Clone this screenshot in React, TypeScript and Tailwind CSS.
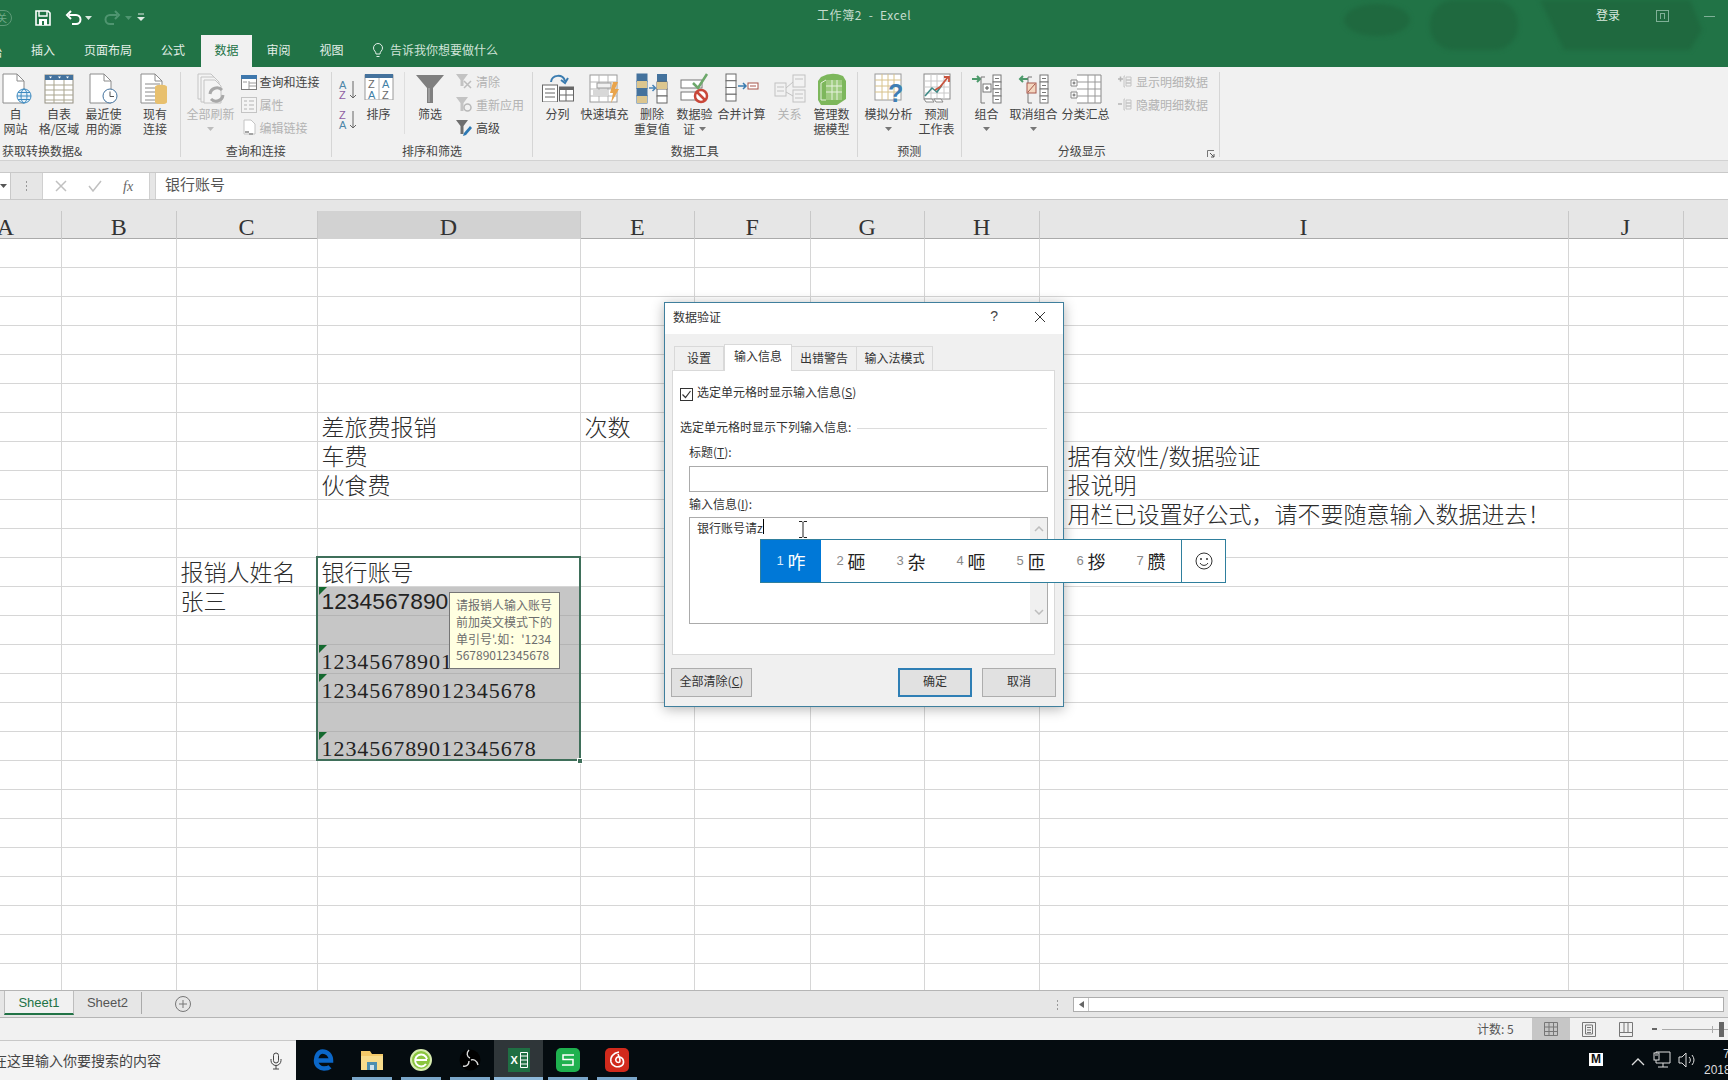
import React from "react";

type P = { children?: React.ReactNode; w?: number; h?: number };
const S = ({ children, w = 32, h = 32 }: P) => (
  <svg width={w} height={h} viewBox={`0 0 ${w} ${h}`} className="shrink-0" fill="none">{children}</svg>
);
const GR = "#8c8c8c";
const Doc = ({ x = 3, c = GR }: { x?: number; c?: string }) => (
  <>
    <path d={`M${x} 2h14l7 7v22h-21z`} fill="#fff" stroke={c} />
    <path d={`M${x + 14} 2v7h7`} stroke={c} />
  </>
);
const Cols = ({ x, y, w, h, n, c = "#8a8a8a", f = "#fff" }: { x: number; y: number; w: number; h: number; n: number; c?: string; f?: string }) => (
  <>
    {Array.from({ length: n }).map((_, i) => (
      <rect key={i} x={x} y={y + (i * h) / n} width={w} height={h / n} fill={f} stroke={c} />
    ))}
  </>
);

const IWeb = () => (
  <S w={36}><Doc x={5} /><circle cx="26" cy="24" r="7" fill="#e6f1f8" stroke="#3d8ac0" /><ellipse cx="26" cy="24" rx="3" ry="7" stroke="#3d8ac0" /><path d="M19 24h14M20 20.5h12M20 27.5h12" stroke="#3d8ac0" /></S>
);
const ITable = () => (
  <S w={30}>
    <rect x="1" y="3" width="28" height="28" fill="#fff" stroke="#938f82" />
    <rect x="1" y="3" width="28" height="5" fill="#44729d" />
    <path d="M5 4.5h3l-1.5 2zM14 4.5h3l-1.5 2zM22 4.5h3l-1.5 2z" fill="#fff" />
    <path d="M1 13h28M1 18h28M1 23h28M1 28h28M10 8v23M20 8v23" stroke="#a9a58f" />
  </S>
);
const IRecent = () => (
  <S w={30}><Doc x={1} /><circle cx="21" cy="24" r="7" fill="#fff" stroke="#44729d" /><path d="M21 19.5V24.5H25" stroke="#555" /></S>
);
const IExisting = () => (
  <S w={30}><Doc x={1} /><path d="M5 12h15M5 16h13M5 20h13M5 24h13M5 28h13" stroke="#8a8a8a" /><path d="M15 15c0-3 12-3 12 0v15c0 3-12 3-12 0z" fill="#e8c06e" /></S>
);
const IRefresh = () => (
  <S w={32}>
    <g stroke="#c4c4c4"><path d="M3 2h13l5 5v20H3z" fill="#f4f4f4" /><path d="M6 5h13l5 5v20H6z" fill="#f4f4f4" /><path d="M9 8h11l6 6v17H9z" fill="#f4f4f4" /></g>
    <path d="M15 22a7 7 0 0 1 12-4M28 23a7 7 0 0 1-12 4" stroke="#a8a8a8" strokeWidth="3" />
  </S>
);
const IConn = () => (
  <S w={16} h={16}><rect x=".5" y="1.5" width="15" height="14" fill="#fff" stroke="#7c7c7c" /><rect x="0" y="1" width="16" height="4" fill="#3f78ad" /><path d="M8 7v8M8 9h7M8 12h7M2 8h4" stroke="#9a9a9a" /></S>
);
const IProp = () => (
  <S w={16} h={17}><rect x=".5" y="1.5" width="15" height="15" fill="#f4f4f4" stroke="#c4c4c4" /><path d="M3 5h3M3 9h3M3 13h3M8 5h5M8 9h5M8 13h5" stroke="#b4b4b4" /></S>
);
const ILink = () => (
  <S w={16} h={17}><path d="M3 1h7l4 4v10H3z" fill="#fff" stroke="#c4c4c4" /><path d="M4 13h4M8 15h4" stroke="#a4a4a4" strokeWidth="2" /></S>
);
const ISortA = ({ flip = false }: { flip?: boolean }) => (
  <S w={20} h={26}>
    <text x="1" y="11" fontSize="11" fontFamily="Liberation Sans" fill={flip ? "#8e5ea2" : "#4d86a8"}>{flip ? "Z" : "A"}</text>
    <text x="1" y="21" fontSize="11" fontFamily="Liberation Sans" fill={flip ? "#4d86a8" : "#8e5ea2"}>{flip ? "A" : "Z"}</text>
    <path d="M15 3v17M12 17l3 3 3-3" stroke="#666" />
  </S>
);
const ISort = () => (
  <S w={30} h={28}>
    <rect x="1" y="3" width="28" height="25" fill="#fff" stroke="#9a9a9a" />
    <rect x="1" y="2" width="28" height="4" fill="#44729d" />
    <path d="M15 6v22" stroke="#b0b0b0" />
    <g fontFamily="Liberation Sans" fontSize="11">
      <text x="4" y="16" fill="#6a6a6a">Z</text><text x="18" y="16" fill="#3f7fa6">A</text>
      <text x="4" y="27" fill="#3f7fa6">A</text><text x="18" y="27" fill="#6a6a6a">Z</text>
    </g>
  </S>
);
const IFunnel = () => (
  <S w={30}><path d="M1 3h28L18 16v15h-6V16z" fill="#7f7f7f" /><path d="M14 16v14" stroke="#bdbdbd" /></S>
);
const IFClear = () => (
  <S w={18} h={17}><path d="M1 1h12L8.5 7v6h-3V7z" fill="#c3c3c3" /><path d="M9 8l7 7M16 8l-7 7" stroke="#bdbdbd" strokeWidth="1.5" /></S>
);
const IFRe = () => (
  <S w={18} h={17}><path d="M1 1h12L8.5 7v8h-3V7z" fill="#c3c3c3" /><circle cx="12.5" cy="11.5" r="3.5" stroke="#b8b8b8" strokeWidth="1.5" /></S>
);
const IFAdv = () => (
  <S w={18} h={17}><path d="M1 1h12L8.5 7v8h-3V7z" fill="#6e6e6e" /><path d="M15 7l2 2-6 7-3 1 1-3z" fill="#2c78b3" /></S>
);
const ISplit = () => (
  <S w={34} h={30}>
    <path d="M10 10c1-8 12-8 14-1M20 8l4 3 3-5" stroke="#3b7cb0" strokeWidth="2" />
    <rect x="1.5" y="13" width="15" height="17" fill="#fff" stroke="#666" /><path d="M4 17h10M4 21h10M4 25h10" stroke="#666" />
    <rect x="18.5" y="15" width="14" height="14" fill="#fff" stroke="#666" /><rect x="18.5" y="15" width="14" height="3" fill="#666" /><path d="M25 18v11M19 23h13" stroke="#666" />
  </S>
);
const IFlash = () => (
  <S w={32}>
    <rect x="1" y="3" width="27" height="27" fill="#fff" stroke="#9a9a9a" />
    <path d="M1 10h27M1 17h27M1 24h27M10 3v27M19 3v27" stroke="#b5b5b5" />
    <rect x="8" y="11" width="14" height="5" fill="#f1f1f1" stroke="#9a9a9a" />
    <rect x="4" y="18" width="15" height="6" fill="#d8d8d8" />
    <path d="M24 10l5 0-3 7h4l-8 14 2-10h-3z" fill="#e9a44c" />
  </S>
);
const IDup = () => (
  <S w={32}>
    <Cols x={1} y={2} w={10} h={29} n={4} c="#44729d" f="#44729d" />
    <rect x="1" y="9" width="10" height="7" fill="#dcc68f" /><rect x="1" y="24" width="10" height="7" fill="#dcc68f" />
    <path d="M13 16h6M16.5 13l3 3-3 3" stroke="#4a85b8" strokeWidth="1.5" />
    <rect x="21" y="2" width="10" height="8" fill="#44729d" /><Cols x={21} y={10} w={10} h={21} n={3} c="#666" />
    <rect x="21" y="10" width="10" height="7" fill="#dcc68f" />
  </S>
);
const IValid = () => (
  <S w={30}>
    <rect x="1" y="8" width="21" height="8" fill="#fff" stroke="#777" /><rect x="1" y="20" width="15" height="8" fill="#fff" stroke="#777" />
    <path d="M13 11l5 5 9-14" stroke="#6da86b" strokeWidth="2.5" />
    <circle cx="21" cy="24" r="6" fill="#fff" stroke="#c9483a" strokeWidth="2.5" /><path d="M17 20l8 8" stroke="#c9483a" strokeWidth="2.5" />
  </S>
);
const IMerge = () => (
  <S w={34}>
    <Cols x={1} y={2} w={10} h={27} n={4} c="#6a6a6a" />
    <path d="M13 14h8M18 11l3 3-3 3" stroke="#3b7cb0" strokeWidth="1.5" />
    <rect x="23" y="11" width="10" height="6" fill="#fff" stroke="#a8574c" /><path d="M25 14h6" stroke="#a8574c" />
  </S>
);
const IRel = () => (
  <S w={32}>
    <g stroke="#c2c2c2" fill="#f2f2f2">
      <rect x="1" y="11" width="11" height="13" /><rect x="19" y="3" width="12" height="12" /><rect x="19" y="18" width="12" height="12" />
    </g>
    <path d="M3 15h7M3 19h7M21 7h8M21 22h8M21 26h8" stroke="#c2c2c2" /><path d="M12 16l7-6M12 20l7 4" stroke="#c2c2c2" />
  </S>
);
const IModel = () => (
  <S w={30} h={34}>
    <path d="M4 5Q15-1 26 4l3 5v18l-9 6H4l-3-5V9z" fill="#7db75c" />
    <path d="M9 8h16v20H9z" fill="#9ecb80" /><path d="M9 8l-5 3v17l5 0M9 14h16M9 20h16M15 8v20M20 8v20" stroke="#e7f2de" />
  </S>
);
const IWhatIf = () => (
  <S w={30}>
    <rect x="1" y="2" width="26" height="26" fill="#fff" stroke="#9a9a9a" />
    <path d="M1 8h26M1 14h26M1 20h26M8 2v26M14 2v26M20 2v26" stroke="#d8c28a" />
    <text x="14" y="30" fontSize="25" fontWeight="700" fontFamily="Liberation Sans" fill="#3f7fb5">?</text>
  </S>
);
const IForecast = () => (
  <S w={30}>
    <rect x="2" y="2" width="26" height="25" fill="#fff" stroke="#8a8a8a" />
    <path d="M2 9h26M2 15h26M2 21h26M9 2v25M15 2v25M22 2v25" stroke="#c8c8c8" />
    <path d="M3 24l7-8 5 4 5-7" stroke="#3f8b88" strokeWidth="1.6" /><path d="M13 18l5-3 8-10M22 5h5v5" stroke="#c9553f" strokeWidth="1.8" />
    <path d="M2 27h8l2 3h-8zM12 27h7l2 3h-7z" fill="#fff" stroke="#8a8a8a" />
  </S>
);
const OutlineTable = ({ x, m }: { x: number; m: React.ReactNode }) => (
  <>
    <path d={`M${x + 5} 5h-4v26h4`} stroke="#777" />
    <rect x={x + 3} y="12" width="8" height="8" fill="#fff" stroke="#777" />{m}
    <Cols x={x + 13} y={3} w={8} h={28} n={4} c="#777" />
    <path d={`M${x + 15} 6.5h4M${x + 15} 13.5h4M${x + 15} 20.5h4M${x + 15} 27.5h4`} stroke="#777" />
  </>
);
const IGroup = () => (
  <S w={32}>
    <path d="M1 7h8M6 4l3 3-3 3" stroke="#4d9a6b" strokeWidth="2" />
    <OutlineTable x={9} m={<path d="M14 16h4M16 14v4" stroke="#555" />} />
  </S>
);
const IUngroup = () => (
  <S w={32}>
    <path d="M10 7H2M5 4L2 7l3 3" stroke="#4d9a6b" strokeWidth="2" />
    <path d="M14 5h-4v26h4" stroke="#777" /><rect x="9" y="11" width="9" height="10" fill="#f3d7c0" stroke="#a8574c" /><path d="M10 20l7-8" stroke="#a8574c" />
    <Cols x={22} y={3} w={8} h={28} n={4} c="#777" />
    <path d="M24 6.5h4M24 13.5h4M24 20.5h4M24 27.5h4" stroke="#777" />
  </S>
);
const ISubtotal = () => (
  <S w={32}>
    <path d="M7 3h24v28H7M1 8h6v6H1zM1 20h6v6H1z" stroke="#888" fill="#fff" />
    <path d="M7 10h24M7 17h24M7 24h24M18 3v28M25 3v28" stroke="#999" /><path d="M2.5 11h3M4 9.5v3M2.5 23h3M4 21.5v3" stroke="#666" />
  </S>
);
const IShow = ({ minus = false }: { minus?: boolean }) => (
  <S w={16} h={15}>
    <path d={minus ? "M1 7h4" : "M1 5h5M3.5 2.5v5"} stroke="#b5b5b5" strokeWidth="1.5" />
    <path d="M8 2h-1v11h1" stroke="#c4c4c4" /><path d="M9 3h5v3H9zM9 6h5v3H9zM9 9h5v3H9z" stroke="#c4c4c4" />
  </S>
);
const ICaret = ({ c = "#777" }: { c?: string }) => (
  <svg width="7" height="4" viewBox="0 0 7 4" className="shrink-0"><path d="M0 0h7L3.5 4z" fill={c} /></svg>
);

function Big({ cls, icon, lines, caret, dim }: { cls: string; icon: React.ReactNode; lines: string[]; caret?: boolean; dim?: boolean }) {
  return (
    <div className={`${cls} shrink-0 flex flex-col items-center ${dim ? "text-[#b3b3b3]" : "text-[#444]"}`}>
      <div className="h-[35px] flex items-start justify-center">{icon}</div>
      {lines.map((l, i) => (
        <div key={i} className="h-[14.5px] leading-[14.5px] whitespace-nowrap flex items-center gap-[4px]">{l}{caret && i === lines.length - 1 && lines.length > 1 && <ICaret />}</div>
      ))}
      {caret && lines.length === 1 && <div className="h-[15px] flex items-center"><ICaret c={dim ? "#bdbdbd" : "#777"} /></div>}
    </div>
  );
}
function Small({ icon, text, dim, cls }: { icon: React.ReactNode; text: string; dim?: boolean; cls?: string }) {
  return (
    <div className={`h-[23px] flex items-center whitespace-nowrap ${dim ? "text-[#b3b3b3]" : "text-[#444]"} ${cls ?? ""}`}>{icon}<span className="ml-[3px]">{text}</span></div>
  );
}
function Group({ cls, label, labelCls, children, extra }: { cls: string; label: string; labelCls?: string; children: React.ReactNode; extra?: React.ReactNode }) {
  return (
    <div className={`${cls} shrink-0 flex relative`}>
      <div className="flex-1 min-w-0 flex flex-col">
        <div className="h-[76px] pt-[5px] flex">{children}</div>
        <div className={`h-[16px] leading-[16px] text-center whitespace-nowrap text-[#444] ${labelCls ?? ""}`}>{label}</div>
      </div>
      <div className="w-px h-[85px] mt-[5px] bg-[#d6d6d6] shrink-0" />
      {extra}
    </div>
  );
}

const COLS = "grid grid-cols-[62px_114.5px_141px_263px_114.5px_115.5px_114.5px_114.5px_529px_115px_45px]";
const LETTERS = ["A", "B", "C", "D", "E", "F", "G", "H", "I", "J", ""];
const SERIF = "123456789012345678";
const CJK = "text-[23px] text-[#2c2c2c] font-light -translate-y-[1px]";
const CJKI = "text-[23px] text-[#2c2c2c] font-light -translate-y-[1px] ml-[24px]";
const NUM = "font-['Liberation_Serif'] text-[22px] tracking-[0.95px] text-[#222] translate-y-[3px]";
type Cell = { t: string; c: string; tri?: boolean };
const CELLS: Record<string, Cell> = {
  "6-3": { t: "差旅费报销", c: CJK }, "6-4": { t: "次数", c: CJK },
  "7-3": { t: "车费", c: CJK }, "7-8": { t: "据有效性/数据验证", c: CJKI },
  "8-3": { t: "伙食费", c: CJK }, "8-8": { t: "报说明", c: CJKI },
  "9-8": { t: "用栏已设置好公式，请不要随意输入数据进去！", c: CJKI },
  "11-2": { t: "报销人姓名", c: CJK }, "11-3": { t: "银行账号", c: CJK },
  "12-2": { t: "张三", c: CJK },
  "12-3": { t: SERIF, c: "font-['Liberation_Sans'] text-[22.8px] text-[#222]", tri: true },
  "14-3": { t: SERIF, c: NUM, tri: true }, "15-3": { t: SERIF, c: NUM, tri: true }, "17-3": { t: SERIF, c: NUM, tri: true },
};

export default function App() {
  return (
    <div className="relative w-[1728px] h-[1080px] overflow-hidden flex flex-col bg-white text-[12px] font-['Noto_Sans_CJK_SC','Liberation_Sans',sans-serif]">
      {/* title bar */}
      <div className="relative z-10 h-[35px] bg-[#217346] shrink-0 flex items-center text-white">
        <svg width="384" height="50" viewBox="0 0 384 50" className="absolute left-[1344px] top-0 blur-[2px]">
          <ellipse cx="33" cy="20" rx="33" ry="16" fill="#1f693f" /><rect x="86" y="0" width="88" height="50" rx="24" fill="#1f693f" /><path d="M196 0h150l12 30-12 20H220z" fill="#1f693f" />
        </svg>
        <div className="relative w-[20px] h-[16px] -ml-[8px] rounded-full border border-[#5e9b78] text-[#6fa988] text-[10px] leading-[14px] text-center">关</div>
        <svg width="16" height="16" viewBox="0 0 16 16" className="relative ml-[23px]"><path d="M1 1h12l2 2v12H1z" stroke="#fff" strokeWidth="1.6" fill="none" /><path d="M4 1v5h8V1" stroke="#fff" strokeWidth="1.4" fill="none" /><rect x="4" y="9" width="8" height="6" fill="#fff" /><rect x="7" y="11" width="2" height="4" fill="#217346" /></svg>
        <svg width="17" height="15" viewBox="0 0 17 15" className="relative ml-[14px]"><path d="M4 5h7a4.500 4.500 0 0 1 0 9H7" stroke="#fff" strokeWidth="2" fill="none" /><path d="M6 1L2 5l4 4" stroke="#fff" strokeWidth="2" fill="none" /></svg>
        <span className="relative ml-[3px]"><ICaret c="#d9e8df" /></span>
        <svg width="17" height="15" viewBox="0 0 17 15" className="relative ml-[12px]"><path d="M13 5H6a4.500 4.500 0 0 0 0 9h4" stroke="#4f9570" strokeWidth="2" fill="none" /><path d="M11 1l4 4-4 4" stroke="#4f9570" strokeWidth="2" fill="none" /></svg>
        <span className="relative ml-[4px]"><ICaret c="#4f9570" /></span>
        <svg width="8" height="9" viewBox="0 0 8 9" className="relative ml-[5px]"><path d="M1 1h6" stroke="#e0ece5" /><path d="M0 4h8L4 8z" fill="#e0ece5" /></svg>
        <div className="absolute left-[817px] top-[7px] leading-[16px] text-[#c4dccd] tracking-[0.6px] whitespace-pre">工作簿2  -  Excel</div>
        <div className="absolute left-[1596px] top-[7px] leading-[16px] text-[#d6e8dd]">登录</div>
        <div className="absolute left-[1656px] top-[10px] w-[13px] h-[12px] border border-[#7fb097]"><div className="mx-auto mt-[2px] w-[5px] h-[6px] border-t border-[#7fb097] border-l border-r" /></div>
        <div className="absolute left-[1704px] top-[16px] w-[11px] h-px bg-[#7fb097]" />
      </div>
      {/* tabs */}
      <div className="h-[32px] bg-[#217346] shrink-0 flex items-stretch text-[#e3efe8] relative">
        <div className="absolute left-[-10px] top-[9px] leading-[16px]">始</div>
        <div className="w-[31px]" />
        <div className="w-[42px] leading-[30px]">插入</div>
        <div className="w-[87px] pl-[10px] leading-[30px] -ml-[10px]"><span className="ml-[11px]">页面布局</span></div>
        <div className="w-[51px] pl-[11px] leading-[30px] whitespace-nowrap">公式</div>
        <div className="w-[51px] bg-[#f1f1f1] text-[#217346] text-center leading-[30px]">数据</div>
        <div className="w-[53px] text-center leading-[30px]">审阅</div>
        <div className="w-[53px] text-center leading-[30px]">视图</div>
        <div className="ml-[14px] flex items-center text-[#d0e3d8] pb-[2px]">
          <svg width="12" height="15" viewBox="0 0 12 15" className="mr-[6px]"><path d="M4 11C4 8 1.500 8 1.500 5a4.500 4.500 0 0 1 9 0C10.500 8 8 8 8 11zM4.500 13.500h3" stroke="#e3efe8" fill="none" /></svg>
          告诉我你想要做什么
        </div>
      </div>
      {/* ribbon */}
      <div className="h-[94px] shrink-0 bg-[#f1f1f1] border-b border-[#d2d2d2] flex">
        <Group cls="w-[180.5px]" label="获取转换数据&" labelCls="!text-left pl-[2px]">
          <Big cls="-ml-[10px] w-[51px]" icon={<IWeb />} lines={["自", "网站"]} />
          <Big cls="w-[36px]" icon={<ITable />} lines={["自表", "格/区域"]} />
          <Big cls="w-[53px]" icon={<IRecent />} lines={["最近使", "用的源"]} />
          <Big cls="w-[50px]" icon={<IExisting />} lines={["现有", "连接"]} />
        </Group>
        <Group cls="w-[151.5px]" label="查询和连接">
          <Big cls="w-[60px]" icon={<IRefresh />} lines={["全部刷新"]} caret dim />
          <div className="-mt-[2px]">
            <Small icon={<IConn />} text="查询和连接" />
            <Small icon={<IProp />} text="属性" dim />
            <Small icon={<ILink />} text="编辑链接" dim />
          </div>
        </Group>
        <Group cls="w-[201px]" label="排序和筛选">
          <div className="w-[32px] flex flex-col items-center pt-[6px] gap-[4px]"><ISortA /><ISortA flip /></div>
          <Big cls="w-[29px]" icon={<ISort />} lines={["排序"]} />
          <div className="w-[12px] flex justify-end"><div className="w-px h-[62px] bg-[#dedede]" /></div>
          <Big cls="w-[50px]" icon={<IFunnel />} lines={["筛选"]} />
          <div className="-mt-[2px]">
            <Small icon={<IFClear />} text="清除" dim />
            <Small icon={<IFRe />} text="重新应用" dim />
            <Small icon={<IFAdv />} text="高级" />
          </div>
        </Group>
        <Group cls="w-[324.5px]" label="数据工具">
          <Big cls="w-[49px]" icon={<ISplit />} lines={["分列"]} />
          <Big cls="w-[45px]" icon={<IFlash />} lines={["快速填充"]} />
          <Big cls="w-[50px]" icon={<IDup />} lines={["删除", "重复值"]} />
          <Big cls="w-[35px]" icon={<IValid />} lines={["数据验", "证"]} caret />
          <Big cls="w-[59px]" icon={<IMerge />} lines={["合并计算"]} />
          <Big cls="w-[37px]" icon={<IRel />} lines={["关系"]} dim />
          <Big cls="w-[47px]" icon={<IModel />} lines={["管理数", "据模型"]} />
        </Group>
        <Group cls="w-[104.5px]" label="预测">
          <Big cls="w-[62px]" icon={<IWhatIf />} lines={["模拟分析"]} caret />
          <Big cls="w-[34px]" icon={<IForecast />} lines={["预测", "工作表"]} />
        </Group>
        <Group cls="w-[257.5px]" label="分级显示" labelCls="pr-[17px]" extra={
          <svg width="8" height="8" viewBox="0 0 8 8" className="absolute left-[245px] top-[83px]"><path d="M7 .5H.5V7" stroke="#777" fill="none" /><path d="M3 3l4 4M7 4v3H4" stroke="#555" fill="none" /></svg>
        }>
          <Big cls="w-[49px]" icon={<IGroup />} lines={["组合"]} caret />
          <Big cls="w-[45px]" icon={<IUngroup />} lines={["取消组合"]} caret />
          <Big cls="w-[59px]" icon={<ISubtotal />} lines={["分类汇总"]} />
          <div className="-mt-[2px] ml-[2px]">
            <Small icon={<IShow />} text="显示明细数据" dim />
            <Small icon={<IShow minus />} text="隐藏明细数据" dim />
          </div>
        </Group>
      </div>
      <div className="h-[11px] shrink-0 bg-[#e6e6e6]" />
      {/* formula bar */}
      <div className="h-[28px] shrink-0 bg-[#e6e6e6] flex items-stretch border-y border-[#c9c9c9]">
        <div className="w-[11px] bg-white border-r border-[#c9c9c9] flex items-center"><ICaret c="#555" /></div>
        <div className="w-[31px] flex items-center justify-center text-[#999]">
          <svg width="3" height="12" viewBox="0 0 3 12"><path d="M1.500 1v2M1.500 5v2M1.500 9v2" stroke="#999" /></svg>
        </div>
        <div className="w-[108px] bg-white border-x border-[#d0d0d0] flex items-center pl-[12px] gap-[21px]">
          <svg width="12" height="12" viewBox="0 0 12 12"><path d="M1 1l10 10M11 1L1 11" stroke="#c0c0c0" strokeWidth="1.5" /></svg>
          <svg width="14" height="12" viewBox="0 0 14 12"><path d="M1 6l4 5 8-10" stroke="#c0c0c0" strokeWidth="1.5" fill="none" /></svg>
          <span className="font-['Liberation_Serif'] italic text-[14px] text-[#666]">fx</span>
        </div>
        <div className="w-[5px]" />
        <div className="flex-1 bg-white border-l border-[#d0d0d0] pl-[9px] text-[15px] leading-[22px] text-[#555]">银行账号</div>
      </div>
      {/* column headers */}
      <div className={`${COLS} h-[39px] shrink-0 bg-[#e6e6e6] pt-[11px] border-b border-[#aaa]`}>
        {LETTERS.map((l, i) => (
          <div key={i} className={`font-['Liberation_Serif'] text-[24px] leading-[27px] pt-[3px] text-[#333] flex justify-center border-r border-[#c8c8c8] ${i === 3 ? "bg-[#d2d2d2] shadow-[inset_0_-2px_0_#217346]" : ""} ${i === 0 ? "pr-[50px]" : ""}`}>{l}</div>
        ))}
      </div>
      {/* grid */}
      <div className="relative h-[751px] shrink-0 overflow-hidden bg-white">
        {Array.from({ length: 26 }).map((_, r) => (
          <div key={r} className={`${COLS} h-[29px]`}>
            {LETTERS.map((_, c) => {
              const v = CELLS[`${r}-${c}`];
              const sel = c === 3 && r >= 12 && r <= 17;
              return (
                <div key={c} className={`relative border-r border-b flex items-center pl-[4px] ${sel ? "bg-[#c6c6c6] border-[#b4b4b4]" : "border-[#d6d6d6]"}`}>
                  {v?.tri && <span className="absolute left-[1px] top-0 border-t-[8px] border-r-[8px] border-t-[#14692f] border-r-transparent" />}
                  {v && <span className={`whitespace-nowrap leading-[24px] ${v.c}`}>{v.t}</span>}
                </div>
              );
            })}
          </div>
        ))}
        <div className="absolute left-[316px] top-[317px] w-[265px] h-[205px] border-2 border-[#3f6f5a]" />
        <div className="absolute left-[577px] top-[519px] w-[6px] h-[6px] bg-[#3f6f5a] border border-white" />
        <div className="absolute left-[449px] top-[353px] w-[111px] h-[77px] bg-[#ffffe1] border border-[#767676] pl-[6px] pt-[4px] text-[12px] leading-[16.8px] text-[#6d6d6d] whitespace-nowrap">
          请报销人输入账号<br />前加英文模式下的<br />单引号'.如：'1234<br />56789012345678
        </div>
      </div>
      {/* sheet tabs */}
      <div className="h-[28px] shrink-0 bg-[#e6e6e6] border-y border-[#b5b5b5] flex items-start relative">
        <div className="ml-[4px] w-[70px] h-[24px] bg-[#f1f1f1] border-b-[2px] border-[#217346] border-x border-x-[#bdbdbd] text-center leading-[23px] text-[13px] text-[#217346] font-['Liberation_Sans']">Sheet1</div>
        <div className="w-[68px] h-[22px] border-r border-[#aaa] text-center leading-[22px] text-[13px] text-[#555] font-['Liberation_Sans'] mt-[1px]">Sheet2</div>
        <svg width="18" height="18" viewBox="0 0 18 18" className="ml-[32px] mt-[4px]"><circle cx="9" cy="9" r="7.500" fill="none" stroke="#777" /><path d="M9 5v8M5 9h8" stroke="#777" /></svg>
        <svg width="3" height="12" viewBox="0 0 3 12" className="ml-[864px] mt-[8px]"><path d="M1.500 1v2M1.500 5v2M1.500 9v2" stroke="#999" /></svg>
        <div className="ml-[14px] mt-[6px] w-[651px] h-[15px] bg-white border border-[#adadad] flex">
          <div className="w-[15px] border-r border-[#c6c6c6] flex items-center justify-center"><svg width="5" height="7" viewBox="0 0 5 7"><path d="M5 0v7L0 3.500z" fill="#666" /></svg></div>
        </div>
      </div>
      {/* status bar */}
      <div className="h-[22px] shrink-0 bg-[#f1f1f1] flex items-stretch text-[#555]">
        <div className="ml-[1477px] w-[56px] leading-[22px] whitespace-nowrap">计数: 5</div>
        <div className="w-[38px] bg-[#c6c6c6] flex items-center justify-center">
          <svg width="14" height="14" viewBox="0 0 14 14"><path d="M.5.500h13v13H.5zM.5 5h13M.5 9.500h13M5 .5v13M9.500 .5v13" stroke="#777" fill="none" /></svg>
        </div>
        <div className="w-[38px] flex items-center justify-center">
          <svg width="14" height="15" viewBox="0 0 14 15"><path d="M.5.500h13v14H.5zM3.500 3h7v9h-7zM5 5.500h4M5 8h4M5 10.500h4" stroke="#777" fill="none" /></svg>
        </div>
        <div className="w-[38px] flex items-center justify-center">
          <svg width="14" height="15" viewBox="0 0 14 15"><path d="M.5.500h13v14H.5zM.5 10.500h13M5 .5v10M9 .5v10" stroke="#777" fill="none" /></svg>
        </div>
        <div className="ml-[7px] flex items-center">
          <div className="w-[5px] h-[2px] bg-[#666]" />
          <div className="relative ml-[5px] w-[66px] h-px bg-[#aaa]">
            <div className="absolute left-[50px] top-[-3px] h-[7px] w-px bg-[#aaa]" />
            <div className="absolute left-[57px] top-[-7px] h-[15px] w-[5px] bg-[#666]" />
          </div>
        </div>
      </div>
      {/* taskbar */}
      <div className="h-[40px] shrink-0 bg-[#050c10] flex items-stretch relative text-white">
        <div className="w-[296px] bg-[#f3f3f3] border-t border-[#c8c8c8] flex items-center text-[#444] text-[14px] overflow-hidden">
          <span className="-ml-[7px] whitespace-nowrap">在这里输入你要搜索的内容</span>
          <svg width="12" height="18" viewBox="0 0 12 18" className="ml-[109px]"><rect x="3.500" y="1" width="5" height="10" rx="2.500" fill="none" stroke="#444" /><path d="M1 7v1.500a5 5 0 0 0 10 0V7M6 13.500V17M3 17h6" stroke="#444" fill="none" /></svg>
        </div>
        <div className="w-[51px] pl-[4px] flex items-center justify-center">
          <svg width="21" height="22" viewBox="0 0 21 22"><path d="M3 11.500h15C18 6 14 2.500 9.500 2.500 5.500 2.500 3 7 3 11.500c0 5 4 8 8 8 3 0 5-.8 6-1.700" stroke="#0b67c8" strokeWidth="4.500" fill="none" /></svg>
        </div>
        <div className="w-[49px] relative flex items-center justify-center"><svg width="22" height="20" viewBox="0 0 22 20"><path d="M0 1h9l2 3h11v16H0z" fill="#f3c969" /><rect x="0" y="6" width="22" height="14" fill="#f8dc8c" /><rect x="6" y="12" width="10" height="8" fill="#4d8fb0" /><rect x="9" y="15" width="4" height="5" fill="#cfe3ee" /></svg><i className="absolute left-[5px] right-[4px] bottom-0 h-[3px] bg-[#7aa6c9]" /></div>
        <div className="w-[49px] relative flex items-center justify-center"><svg width="24" height="24" viewBox="0 0 24 24"><circle cx="12" cy="12" r="10" fill="#8bc53f" stroke="#d7ecaf" strokeWidth="2" /><path d="M6 12h12M17 16a6 6 0 1 1 1-5" stroke="#fff" strokeWidth="2" fill="none" /></svg><i className="absolute left-[5px] right-[4px] bottom-0 h-[3px] bg-[#7aa6c9]" /></div>
        <div className="w-[49px] relative flex items-center justify-center"><svg width="22" height="22" viewBox="0 0 22 22"><circle cx="11" cy="11" r="10.500" fill="#000" /><path d="M10 1c-3 3-2 7 1 8M19 16c-1-5-5-6-7-5M4 17c4 1 6-2 6-5" stroke="#ddd" strokeWidth="1.400" fill="none" /></svg><i className="absolute left-[5px] right-[4px] bottom-0 h-[3px] bg-[#7aa6c9]" /></div>
        <div className="w-[49px] relative bg-[#2f3639] flex items-center justify-center"><div className="w-[22px] h-[24px] bg-[#1f6f43] flex items-center pl-[3px] gap-[2px]"><span className="font-['Liberation_Sans'] font-bold text-[11px] text-white">X</span><svg width="8" height="16" viewBox="0 0 8 16"><path d="M.5.500h7v15h-7zM.5 4h7M.5 8h7M.5 12h7" stroke="#fff" fill="none" /></svg></div><i className="absolute left-0 right-0 bottom-0 h-[3px] bg-[#8db8da]" /></div>
        <div className="w-[49px] relative flex items-center justify-center"><div className="w-[24px] h-[24px] rounded-[5px] bg-[#1fb14f] flex items-center justify-center"><svg width="14" height="12" viewBox="0 0 14 12"><path d="M13 1H2v4.500h10V11H1" stroke="#fff" strokeWidth="1.500" fill="none" /></svg></div><i className="absolute left-[5px] right-[4px] bottom-0 h-[3px] bg-[#7aa6c9]" /></div>
        <div className="w-[49px] relative flex items-center justify-center"><div className="w-[24px] h-[24px] rounded-[5px] bg-[#d12a1c] flex items-center justify-center"><svg width="16" height="20" viewBox="0 0 16 20"><path d="M10 2C4 3 1 7 2 12c1 4 6 6 10 4 4-2 3-8-1-9-3-1-5 2-4 4 1 2 4 2 4 0 0-2-1-5-2-7" stroke="#fff" strokeWidth="1.600" fill="none" /></svg></div><i className="absolute left-[5px] right-[4px] bottom-0 h-[3px] bg-[#7aa6c9]" /></div>
        <div className="ml-[948px] mt-[13px] w-[14px] h-[13px] bg-white text-[#111] text-[12px] leading-[13px] text-center font-bold font-['Liberation_Sans']">M</div>
        <svg width="14" height="9" viewBox="0 0 14 9" className="ml-[28px] mt-[17px]"><path d="M1 8l6-6 6 6" stroke="#ddd" strokeWidth="1.300" fill="none" /></svg>
        <svg width="18" height="18" viewBox="0 0 18 18" className="ml-[8px] mt-[11px]"><path d="M3 1h14v11H3zM10 12v4M5 16h10" stroke="#ddd" fill="none" /><rect x="1" y="2" width="5" height="7" fill="#050c10" stroke="#ddd" /><path d="M2 4h3" stroke="#ddd" /></svg>
        <svg width="18" height="16" viewBox="0 0 18 16" className="ml-[7px] mt-[12px]"><path d="M1 5h3l4-4v14l-4-4H1zM11 5a4 4 0 0 1 0 6M14 3a8 8 0 0 1 0 10" stroke="#ddd" fill="none" /></svg>
        <div className="absolute left-[1704px] top-[6px] w-[60px] text-[12px] leading-[16px] text-[#ddd] font-['Liberation_Sans'] whitespace-nowrap text-left">
          <div className="pl-[19px]">7:40</div><div>2018/1/1</div>
        </div>
      </div>

      {/* dialog */}
      <div className="absolute z-20 left-[664px] top-[302px] w-[400px] h-[405px] bg-[#f0f0f0] border border-[#3f7f9d] shadow-[0_2px_12px_rgba(0,0,0,0.3)] flex flex-col text-[#333]">
        <div className="h-[31px] shrink-0 bg-white flex items-center pl-[8px] pb-[4px]">
          <span>数据验证</span>
          <span className="ml-auto mr-[36px] text-[14px] font-['Liberation_Sans'] text-[#444]">?</span>
          <svg width="12" height="12" viewBox="0 0 12 12" className="mr-[17px]"><path d="M1 1l10 10M11 1L1 11" stroke="#333" /></svg>
        </div>
        <div className="h-[36px] shrink-0 flex items-end pl-[9px]">
          <div className="w-[50px] h-[24px] bg-[#f0f0f0] border border-b-0 border-[#d9d9d9] text-center leading-[21px]">设置</div>
          <div className="w-[68px] h-[27px] bg-white border-t border-x border-[#d9d9d9] text-center leading-[22px] relative top-px z-10">输入信息</div>
          <div className="w-[65px] h-[24px] bg-[#f0f0f0] border-t border-r border-[#d9d9d9] text-center leading-[21px]">出错警告</div>
          <div className="w-[76px] h-[24px] bg-[#f0f0f0] border-t border-r border-[#d9d9d9] text-center leading-[21px]">输入法模式</div>
        </div>
        <div className="ml-[7px] w-[383px] h-[285px] shrink-0 bg-white border border-[#d9d9d9] pl-[7px] pt-[16px] flex flex-col">
          <div className="h-[14px] flex items-center">
            <svg width="13" height="13" viewBox="0 0 13 13"><rect x=".5" y=".5" width="12" height="12" fill="#fff" stroke="#333" /><path d="M2.500 6.500l3 3 5-6.500" stroke="#333" strokeWidth="1.200" fill="none" /></svg>
            <span className="ml-[4px] whitespace-nowrap -translate-y-[2px]">选定单元格时显示输入信息(<u>S</u>)</span>
          </div>
          <div className="mt-[19px] h-[16px] flex items-center pr-[7px]">
            <span className="whitespace-nowrap -translate-y-[1px]">选定单元格时显示下列输入信息:</span>
            <div className="flex-1 h-px bg-[#dcdcdc] ml-[6px]" />
          </div>
          <div className="ml-[9px] w-[359px]">
            <div className="mt-[10px] h-[16px] leading-[12px]">标题(<u>T</u>):</div>
            <div className="mt-[4px] h-[26px] border border-[#ababab] bg-white" />
            <div className="mt-[5px] h-[16px] leading-[14px]">输入信息(<u>I</u>):</div>
            <div className="mt-[4px] h-[107px] border border-[#ababab] bg-white flex">
              <div className="flex-1 pl-[7px] pt-[1px] leading-[17px] flex items-start">银行账号请z<span className="inline-block w-px h-[15px] bg-black" /></div>
              <div className="w-[17px] bg-[#f0f0f0] flex flex-col items-center justify-between py-[8px]">
                <svg width="10" height="6" viewBox="0 0 10 6"><path d="M1 5l4-4 4 4" stroke="#bdbdbd" strokeWidth="1.500" fill="none" /></svg>
                <svg width="10" height="6" viewBox="0 0 10 6"><path d="M1 1l4 4 4-4" stroke="#bdbdbd" strokeWidth="1.500" fill="none" /></svg>
              </div>
            </div>
          </div>
        </div>
        <div className="mt-[13px] flex pl-[6px] pr-[7px] h-[29px]">
          <div className="w-[81px] bg-[#e1e1e1] border border-[#adadad] text-center leading-[24px]">全部清除(<u>C</u>)</div>
          <div className="ml-auto w-[74px] bg-[#e1e1e1] border-2 border-[#2f7fb5] text-center leading-[22px]">确定</div>
          <div className="ml-[10px] w-[74px] bg-[#e1e1e1] border border-[#adadad] text-center leading-[24px]">取消</div>
        </div>
      </div>

      {/* I-beam */}
      <svg width="10" height="17" viewBox="0 0 10 17" className="absolute z-30 left-[798px] top-[521px]"><path d="M1 .5h3l1 1 1-1h3M5 1.500v14M1 16.500h3l1-1 1 1h3" stroke="#222" fill="none" /></svg>

      {/* IME bar */}
      <div className="absolute z-30 left-[760px] top-[539px] h-[44px] w-[466px] bg-white border border-[#2f7f9d] flex items-stretch">
        {["咋", "砸", "杂", "咂", "匝", "拶", "臜"].map((ch, i) => (
          <div key={ch} className={`${i === 0 ? "bg-[#0078d7] w-[60px] text-white" : "w-[60px] text-[#222]"} flex items-center justify-center gap-[4px] text-[18px]`}>
            <span className={`text-[13px] font-['Liberation_Sans'] ${i === 0 ? "text-[#d5e9fa]" : "text-[#888]"}`}>{i + 1}</span>{ch}
          </div>
        ))}
        <div className="flex-1 border-l border-[#2f7f9d] flex items-center justify-center">
          <svg width="18" height="18" viewBox="0 0 18 18"><circle cx="9" cy="9" r="8" fill="none" stroke="#333" /><circle cx="6" cy="7" r="1" fill="#333" /><circle cx="12" cy="7" r="1" fill="#333" /><path d="M5 11a4.500 4.500 0 0 0 8 0" fill="none" stroke="#333" /></svg>
        </div>
      </div>
    </div>
  );
}
